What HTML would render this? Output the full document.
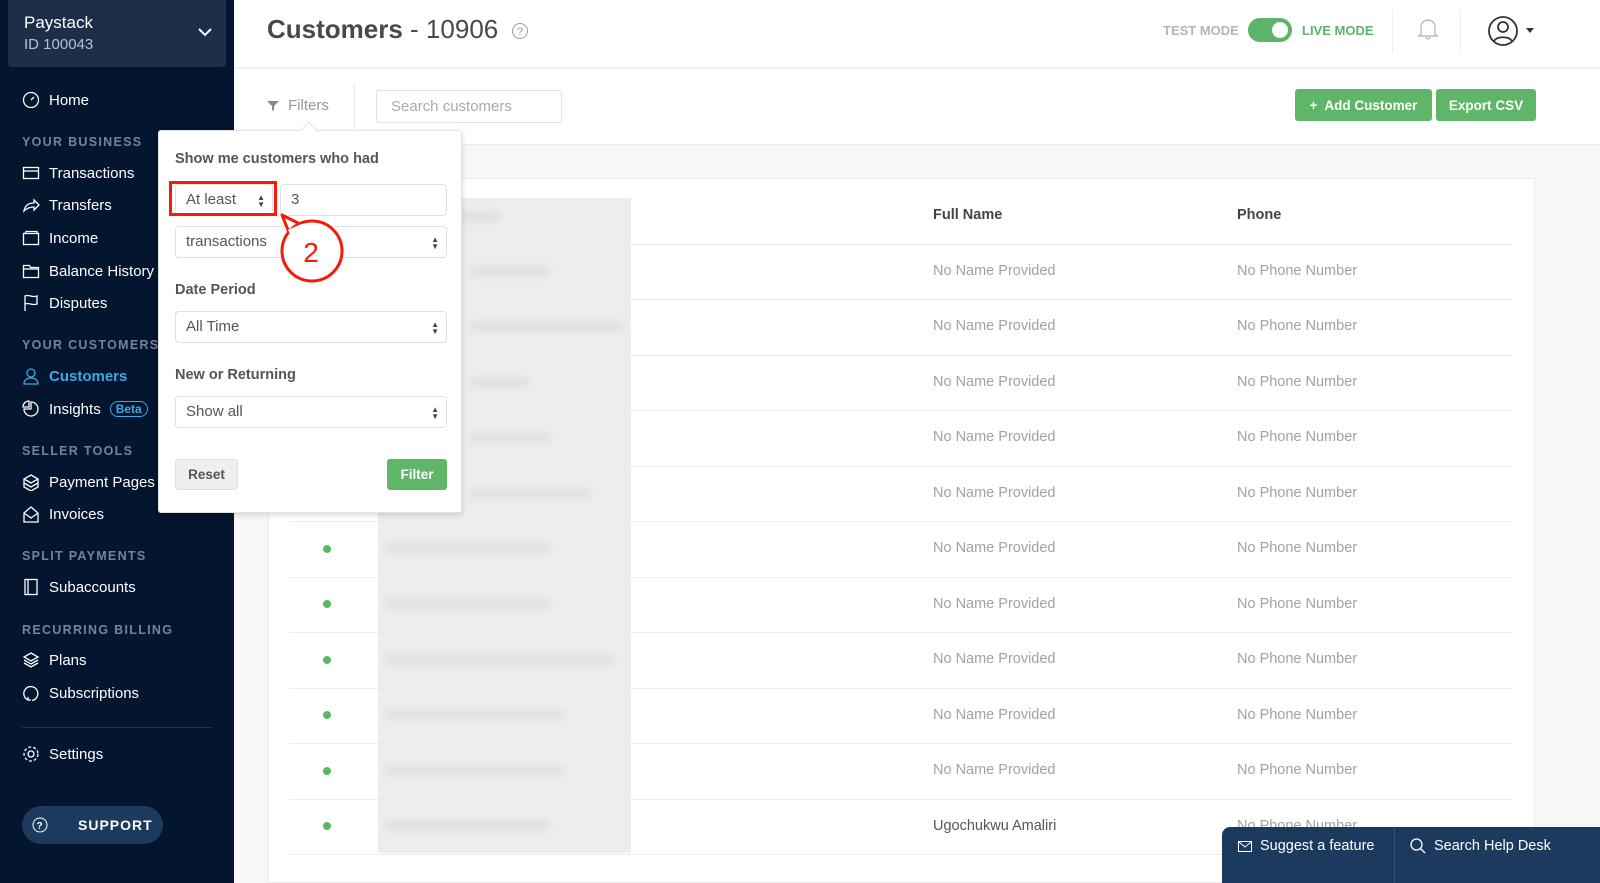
<!DOCTYPE html>
<html><head><meta charset="utf-8"><style>
*{box-sizing:border-box;margin:0;padding:0}
body{width:1600px;height:883px;overflow:hidden;font-family:"Liberation Sans",sans-serif;background:#f7f7f7;position:relative}
.a{position:absolute}
#sb{left:0;top:0;width:234px;height:883px;background:#03152f}
.acct{left:8px;top:0;width:218px;height:67px;background:#1c2e48;border-radius:0 0 4px 4px}
.ni{left:22px;color:#fff;font-size:15px;display:flex;align-items:center;gap:9px;white-space:nowrap}
.ni svg{width:18px;height:18px;stroke:#fff;fill:none;stroke-width:1.3}
.sec{left:22px;color:#75839a;font-size:12.5px;font-weight:bold;letter-spacing:1.3px}
#hd{left:234px;top:0;width:1366px;height:68px;background:#fff;border-bottom:1px solid #eee}
#tb{left:234px;top:69px;width:1366px;height:76px;background:#fff;border-bottom:1px solid #eee}
.btn{background:#5fb668;color:#fff;font-size:13.5px;font-weight:bold;border-radius:3px;display:flex;align-items:center;justify-content:center}
#card{left:268px;top:178px;width:1267px;height:705px;background:#fff;border:1px solid #ececec}
.row{left:290px;width:1222px;height:1px;background:#ebebeb}
.c{font-size:14.5px;color:#a3a39c}
.dot{width:8px;height:8px;border-radius:50%;background:#5cb85c}
.blur{left:378px;top:198px;width:253px;height:655px;background:#ededed}
.bl{height:9px;background:#d8d8d8;border-radius:5px;filter:blur(4px);opacity:.7}
#pop{left:158px;top:130px;width:304px;height:383px;background:#fff;border:1px solid #e3e3e3;box-shadow:0 2px 6px rgba(0,0,0,.15);border-radius:3px}
.lab{font-size:14.5px;font-weight:bold;color:#555}
.sel{border:1px solid #e0e0e0;border-radius:4px;height:32px;font-size:15px;color:#555;padding:6px 10px;background:#fff}
.arr{position:absolute;right:7px;top:9px;font-size:8px;line-height:7px;color:#444}
</style></head><body>
<div id="sb" class="a">
 <div class="acct a"></div>
 <div class="a" style="left:24px;top:13px;color:#fff;font-size:17px">Paystack</div>
 <div class="a" style="left:24px;top:36px;color:#b7c0cd;font-size:15px">ID 100043</div>
 <svg class="a" style="left:197px;top:26px" width="16" height="12" viewBox="0 0 16 12"><path d="M2 3l6 6 6-6" stroke="#fff" stroke-width="2" fill="none"/></svg>
 <div class="ni a" style="top:91px"><svg viewBox="0 0 18 18"><circle cx="9" cy="9" r="7.5"/><path d="M9 9l3-3"/></svg>Home</div>
 <div class="sec a" style="top:135px">YOUR BUSINESS</div>
 <div class="ni a" style="top:164px"><svg viewBox="0 0 18 18"><rect x="1.5" y="3.5" width="15" height="11"/><path d="M1.5 7h15"/></svg>Transactions</div>
 <div class="ni a" style="top:196px"><svg viewBox="0 0 18 18"><path d="M2 15c1-6 5-8 10-8V4l5 5-5 5v-3c-4 0-7 1-10 4z"/></svg>Transfers</div>
 <div class="ni a" style="top:229px"><svg viewBox="0 0 18 18"><rect x="1.5" y="4.5" width="15" height="11"/><path d="M3 4.5l1-2h11v2"/></svg>Income</div>
 <div class="ni a" style="top:262px"><svg viewBox="0 0 18 18"><path d="M1.5 3.5h6l1 2h8v10h-15z"/><path d="M1.5 7h15"/></svg>Balance History</div>
 <div class="ni a" style="top:294px"><svg viewBox="0 0 18 18"><path d="M3 17V2c4-2 7 2 12 0v8c-5 2-8-2-12 0"/></svg>Disputes</div>
 <div class="sec a" style="top:338px">YOUR CUSTOMERS</div>
 <div class="ni a" style="top:367px;color:#3ba9e2;font-weight:bold"><svg viewBox="0 0 18 18" style="stroke:#3ba9e2"><circle cx="9" cy="6" r="4"/><path d="M2 17c0-4 3-6 7-6s7 2 7 6z"/></svg>Customers</div>
 <div class="ni a" style="top:400px"><svg viewBox="0 0 18 18"><path d="M9 2a7 7 0 1 1-7 7h7z"/><path d="M7 1a6 6 0 0 0-6 6h6z"/></svg>Insights <span style="border:1px solid #3ba9e2;color:#3ba9e2;border-radius:9px;padding:0 5px;font-size:12px;font-weight:bold">Beta</span></div>
 <div class="sec a" style="top:444px">SELLER TOOLS</div>
 <div class="ni a" style="top:473px"><svg viewBox="0 0 18 18"><path d="M9 2l7 4-7 4-7-4zM2 10l7 4 7-4M2 6v8l7 4 7-4V6"/></svg>Payment Pages</div>
 <div class="ni a" style="top:505px"><svg viewBox="0 0 18 18"><path d="M2 8l7-6 7 6v9H2zM2 8l7 5 7-5"/></svg>Invoices</div>
 <div class="sec a" style="top:549px">SPLIT PAYMENTS</div>
 <div class="ni a" style="top:578px"><svg viewBox="0 0 18 18"><rect x="3" y="1.5" width="12" height="15"/><path d="M6 1.5v15"/></svg>Subaccounts</div>
 <div class="sec a" style="top:623px">RECURRING BILLING</div>
 <div class="ni a" style="top:651px"><svg viewBox="0 0 18 18"><path d="M9 2l7 4-7 4-7-4zM2 9l7 4 7-4M2 12l7 4 7-4"/></svg>Plans</div>
 <div class="ni a" style="top:684px"><svg viewBox="0 0 18 18"><path d="M6 16A7 7 0 1 1 10 16.5"/><path d="M6 13v3h3"/></svg>Subscriptions</div>
 <div class="a" style="left:22px;top:727px;width:190px;height:1px;background:#1f3350"></div>
 <div class="ni a" style="top:745px"><svg viewBox="0 0 18 18"><circle cx="9" cy="9" r="3"/><circle cx="9" cy="9" r="7" stroke-dasharray="3 2"/></svg>Settings</div>
 <div class="a" style="left:22px;top:806px;width:141px;height:38px;border-radius:19px;background:#1c3a5e;color:#fff;font-size:14px;font-weight:bold;letter-spacing:1px">
  <svg class="a" style="left:10px;top:11px" width="16" height="16" viewBox="0 0 16 16"><circle cx="8" cy="8" r="7" stroke="#fff" fill="none"/><text x="8" y="12" font-size="10" fill="#fff" text-anchor="middle" font-family="Liberation Sans">?</text></svg>
  <span class="a" style="left:56px;top:11px">SUPPORT</span></div>
</div>

<div id="hd" class="a">
 <div class="a" style="left:33px;top:14px;font-size:26px;color:#4a4a42"><b>Customers</b> - 10906</div>
 <svg class="a" style="left:277px;top:22px" width="18" height="18" viewBox="0 0 18 18"><circle cx="9" cy="9" r="7.5" stroke="#999" fill="none"/><text x="9" y="13" font-size="11" fill="#999" text-anchor="middle" font-family="Liberation Sans">?</text></svg>
 <div class="a" style="left:929px;top:23px;font-size:13px;font-weight:bold;color:#b5b5b5">TEST MODE</div>
 <div class="a" style="left:1014px;top:18px;width:44px;height:24px;border-radius:12px;background:#5cb46a"><div class="a" style="right:4px;top:4px;width:16px;height:16px;border-radius:50%;background:#fff"></div></div>
 <div class="a" style="left:1068px;top:23px;font-size:13px;font-weight:bold;color:#5cb46a">LIVE MODE</div>
 <div class="a" style="left:1158px;top:9px;width:1px;height:44px;background:#eee"></div>
 <svg class="a" style="left:1183px;top:17px" width="22" height="24" viewBox="0 0 22 24"><path d="M4 17V10a7 7 0 0 1 14 0v7l2 2H2zM9 20a2 2 0 0 0 4 0" stroke="#bbb" fill="none" stroke-width="1.4"/></svg>
 <div class="a" style="left:1226px;top:9px;width:1px;height:44px;background:#eee"></div>
 <svg class="a" style="left:1252px;top:14px" width="34" height="34" viewBox="0 0 34 34"><circle cx="17" cy="17" r="14" stroke="#333" stroke-width="1.8" fill="none"/><circle cx="17" cy="13" r="5" stroke="#333" stroke-width="1.8" fill="none"/><path d="M8 27c3-5 15-5 18 0" stroke="#333" stroke-width="1.8" fill="none"/></svg>
 <div class="a" style="left:1292px;top:28px;border:4px solid transparent;border-top:5px solid #333"></div>
</div>

<div id="tb" class="a">
 <svg class="a" style="left:33px;top:31px" width="12" height="12" viewBox="0 0 12 12"><path d="M0 1h12L7 6v5L5 10V6z" fill="#888"/></svg>
 <div class="a" style="left:54px;top:28px;font-size:15px;color:#999">Filters</div>
 <div class="a" style="left:120px;top:16px;width:1px;height:44px;background:#e8e8e8"></div>
 <div class="a" style="left:142px;top:21px;width:186px;height:33px;border:1px solid #e2e2e2;border-radius:2px;font-size:15px;color:#aaa;padding:7px 14px">Search customers</div>
 <div class="a btn" style="left:1061px;top:20px;width:137px;height:32px">+&nbsp; Add Customer</div>
 <div class="a btn" style="left:1202px;top:20px;width:100px;height:32px">Export CSV</div>
</div>

<div id="card" class="a"></div>
<div class="blur a"></div>
<div class="a c" style="left:933px;top:207px;color:#444;font-weight:bold">Full Name</div>
<div class="a c" style="left:1237px;top:207px;color:#444;font-weight:bold">Phone</div>
<div class="a bl" style="left:440px;top:212px;width:60px"></div>

<div class="row a" style="top:244px"></div><div class="row a" style="top:299px"></div><div class="row a" style="top:355px"></div><div class="row a" style="top:410px"></div><div class="row a" style="top:466px"></div><div class="row a" style="top:521px"></div><div class="row a" style="top:577px"></div><div class="row a" style="top:632px"></div><div class="row a" style="top:688px"></div><div class="row a" style="top:743px"></div><div class="row a" style="top:799px"></div><div class="row a" style="top:854px"></div>

<div class="a c" style="left:933px;top:263px">No Name Provided</div><div class="a c" style="left:1237px;top:263px">No Phone Number</div>
<div class="a c" style="left:933px;top:318px">No Name Provided</div><div class="a c" style="left:1237px;top:318px">No Phone Number</div>
<div class="a c" style="left:933px;top:374px">No Name Provided</div><div class="a c" style="left:1237px;top:374px">No Phone Number</div>
<div class="a c" style="left:933px;top:429px">No Name Provided</div><div class="a c" style="left:1237px;top:429px">No Phone Number</div>
<div class="a c" style="left:933px;top:485px">No Name Provided</div><div class="a c" style="left:1237px;top:485px">No Phone Number</div>
<div class="a c" style="left:933px;top:540px">No Name Provided</div><div class="a c" style="left:1237px;top:540px">No Phone Number</div>
<div class="a c" style="left:933px;top:596px">No Name Provided</div><div class="a c" style="left:1237px;top:596px">No Phone Number</div>
<div class="a c" style="left:933px;top:651px">No Name Provided</div><div class="a c" style="left:1237px;top:651px">No Phone Number</div>
<div class="a c" style="left:933px;top:707px">No Name Provided</div><div class="a c" style="left:1237px;top:707px">No Phone Number</div>
<div class="a c" style="left:933px;top:762px">No Name Provided</div><div class="a c" style="left:1237px;top:762px">No Phone Number</div>
<div class="a c" style="left:933px;top:818px;color:#555">Ugochukwu Amaliri</div><div class="a c" style="left:1237px;top:818px">No Phone Number</div>

<div class="a dot" style="left:323px;top:545px"></div><div class="a dot" style="left:323px;top:600px"></div><div class="a dot" style="left:323px;top:656px"></div><div class="a dot" style="left:323px;top:711px"></div><div class="a dot" style="left:323px;top:767px"></div><div class="a dot" style="left:323px;top:822px"></div>

<div class="a bl" style="left:470px;top:267px;width:80px"></div><div class="a bl" style="left:470px;top:322px;width:155px"></div><div class="a bl" style="left:470px;top:378px;width:60px"></div><div class="a bl" style="left:470px;top:433px;width:80px"></div><div class="a bl" style="left:470px;top:489px;width:120px"></div><div class="a bl" style="left:385px;top:544px;width:165px"></div><div class="a bl" style="left:385px;top:599px;width:165px"></div><div class="a bl" style="left:385px;top:655px;width:230px"></div><div class="a bl" style="left:385px;top:710px;width:180px"></div><div class="a bl" style="left:385px;top:766px;width:180px"></div><div class="a bl" style="left:385px;top:821px;width:165px"></div>

<div id="pop" class="a">
 <div class="a" style="left:144px;top:-7px;width:12px;height:12px;background:#fff;transform:rotate(45deg);border-left:1px solid #e3e3e3;border-top:1px solid #e3e3e3"></div>
 <div class="a lab" style="left:16px;top:20px">Show me customers who had</div>
 <div class="a sel" style="left:16px;top:53px;width:98px">At least<span class="arr">▲<br>▼</span></div>
 <div class="a sel" style="left:121px;top:53px;width:167px">3</div>
 <div class="a sel" style="left:16px;top:95px;width:272px">transactions<span class="arr">▲<br>▼</span></div>
 <div class="a lab" style="left:16px;top:151px">Date Period</div>
 <div class="a sel" style="left:16px;top:180px;width:272px">All Time<span class="arr">▲<br>▼</span></div>
 <div class="a lab" style="left:16px;top:236px">New or Returning</div>
 <div class="a sel" style="left:16px;top:265px;width:272px">Show all<span class="arr">▲<br>▼</span></div>
 <div class="a" style="left:16px;top:328px;width:63px;height:31px;background:#efefef;border:1px solid #e0e0e0;border-radius:3px;font-size:13.5px;font-weight:bold;color:#555;text-align:center;line-height:29px">Reset</div>
 <div class="a btn" style="left:228px;top:328px;width:60px;height:31px">Filter</div>
</div>
<div class="a" style="left:169px;top:181px;width:108px;height:35px;border:3px solid #f41a0c"></div>
<svg class="a" style="left:260px;top:200px" width="100" height="100" viewBox="260 200 100 100">
 <path d="M282 215L292 240L304 226Z" fill="#fff" stroke="#f41a0c" stroke-width="3" stroke-linejoin="round"/>
 <circle cx="312" cy="251" r="30" fill="#fff" stroke="#f41a0c" stroke-width="3"/>
 <path d="M289 232L303 226" stroke="#fff" stroke-width="5"/>
 <text x="311" y="262" font-size="28" fill="#f41a0c" text-anchor="middle" font-family="Liberation Sans">2</text>
</svg>

<div class="a" style="left:1222px;top:827px;width:378px;height:56px;background:#1c3a5e;border-radius:8px 0 0 0;color:#fff;font-size:14.5px">
 <svg class="a" style="left:16px;top:14px" width="14" height="12" viewBox="0 0 14 12"><rect x="0.5" y="0.5" width="13" height="10" stroke="#fff" fill="none"/><path d="M1 1l6 5 6-5" stroke="#fff" fill="none"/></svg>
 <span class="a" style="left:38px;top:11px">Suggest a feature</span>
 <div class="a" style="left:172px;top:0;width:1px;height:56px;background:#2f5075"></div>
 <svg class="a" style="left:188px;top:11px" width="16" height="16" viewBox="0 0 16 16"><circle cx="6.5" cy="6.5" r="5.5" stroke="#fff" fill="none" stroke-width="1.3"/><path d="M10.5 10.5L15 15" stroke="#fff" stroke-width="1.3"/></svg>
 <span class="a" style="left:212px;top:11px">Search Help Desk</span>
</div>
</body></html>
